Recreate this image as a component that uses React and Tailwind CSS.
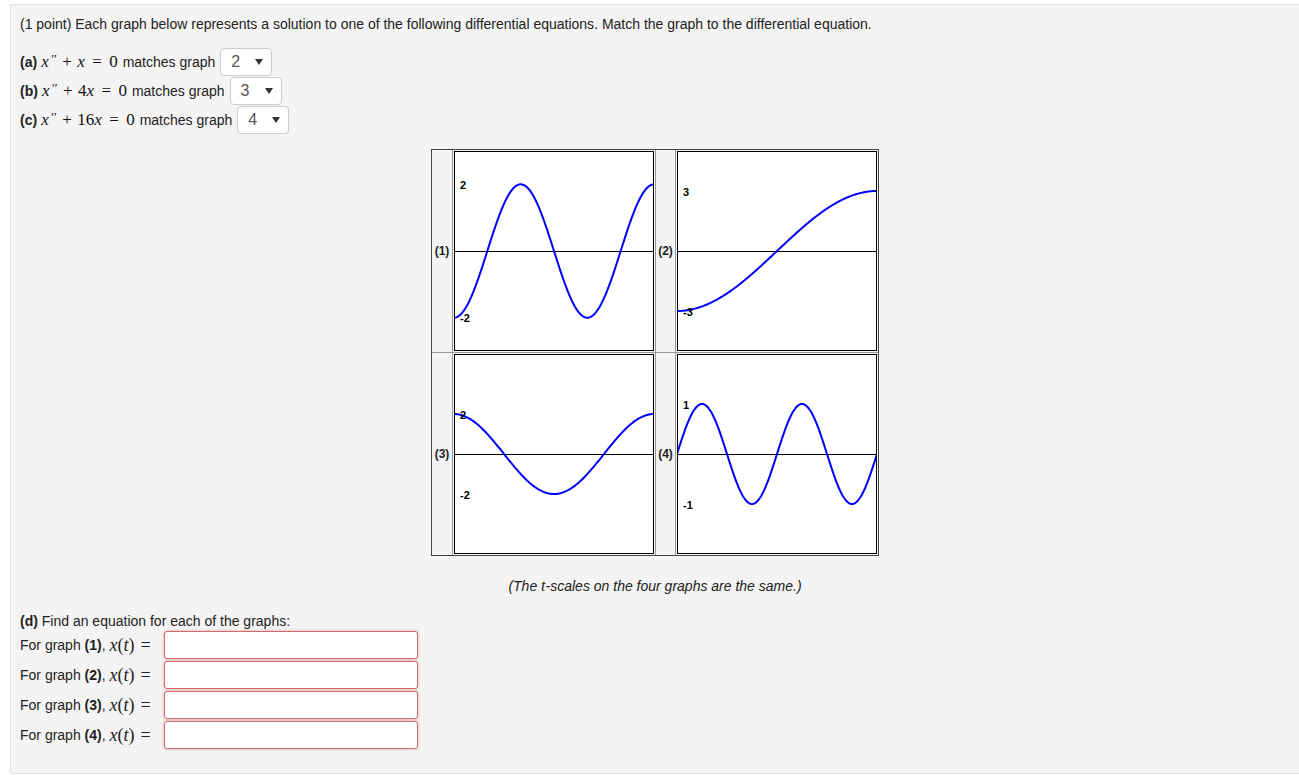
import React from 'react';

const serif = "font-['Liberation_Serif','Times_New_Roman',serif]";

// graph curves in pixel space (200x200, axis at y=100, 200px = pi)
const graphs = [
  { id: 1, f: (x) => 100 + 66.67 * Math.cos((3 * Math.PI * x) / 200), labels: [['2', 33.3], ['-2', 166.7]] },
  { id: 2, f: (x) => 100 + 60 * Math.cos((Math.PI * x) / 200), labels: [['3', 40], ['-3', 160]] },
  { id: 3, f: (x) => 100 - 40 * Math.cos((2 * Math.PI * x) / 200), labels: [['2', 60], ['-2', 140]] },
  { id: 4, f: (x) => 100 - 50 * Math.sin((4 * Math.PI * x) / 200), labels: [['1', 50], ['-1', 150]] },
];

const Graph = ({ g }) => {
  const pts = [];
  for (let x = 0; x <= 200; x += 1) pts.push(`${x},${g.f(x).toFixed(2)}`);
  return (
    <svg width="200" height="200" viewBox="0 0 200 200" className="block bg-white">
      <line x1="0" y1="100.5" x2="200" y2="100.5" stroke="#000" strokeWidth="1" />
      <polyline points={pts.join(' ')} fill="none" stroke="#0000ff" strokeWidth="2" />
      {g.labels.map(([t, y]) => (
        <text key={t} x="6" y={y + 4.5} fontSize="11" fontWeight="bold" fontFamily="Liberation Sans, Arial, sans-serif" fill="#000">
          {t}
        </text>
      ))}
      <rect x="0.5" y="0.5" width="199" height="199" fill="none" stroke="#000" strokeWidth="1" />
    </svg>
  );
};

const LabelCell = ({ n, first }) => (
  <div className={`w-[20px] flex items-center justify-center text-[12px] font-bold text-[#222] ${first ? '' : 'border-l border-[#999]'}`}>
    ({n})
  </div>
);

const GraphCell = ({ g }) => (
  <div className="border-l border-[#999] p-px">
    <Graph g={g} />
  </div>
);

const Select = ({ value }) => (
  <div className="ml-[5px] flex h-[28px] w-[52px] items-center rounded-[4px] border border-[#ccc] bg-white pl-[10px] text-[16px] text-[#555]">
    <span className="w-[24px]">{value}</span>
    <svg width="8" height="6" viewBox="0 0 8 6" className="block">
      <path d="M0 0 L8 0 L4 6 Z" fill="#333" />
    </svg>
  </div>
);

const Eq = ({ coef }) => (
  <span className={`${serif} ml-[4px] flex items-center text-[17px] text-[#111]`}>
    <span className="w-[10px]"><i>x</i></span>
    <span className="w-[6px] text-[13px] -mt-[7px]">′′</span>
    <span className="w-[20px] text-center">+</span>
    {coef && <span>{coef}</span>}
    <span className="w-[10px]"><i>x</i></span>
    <span className="w-[20px] text-center">=</span>
    <span className="ml-[2px]">0</span>
  </span>
);

const MatchRow = ({ letter, coef, value }) => (
  <div className="mb-px flex h-[28px] items-center">
    <b>({letter})</b>
    <Eq coef={coef} />
    <span className="ml-[5px]">matches graph</span>
    <Select value={value} />
  </div>
);

const AnswerRow = ({ n }) => (
  <div className="mb-[2px] flex h-[28px] items-center">
    <div className="w-[144px] shrink-0 whitespace-nowrap flex items-center">
      <span>For graph&nbsp;</span>
      <b>({n})</b>
      <span>,&nbsp;</span>
      <span className={`${serif} text-[18px] flex items-center`}>
        <i>x</i>
        <span>(</span>
        <i>t</i>
        <span>)</span>
        <span className="ml-[6px]">=</span>
      </span>
    </div>
    <input
      type="text"
      className="h-[28px] w-[254px] rounded-[3px] border border-[#cf6b6b] bg-white shadow-[0_0_3px_rgba(210,90,90,0.55)] outline-none"
    />
  </div>
);

export default function App() {
  return (
    <div className="min-h-screen bg-white pt-[4px] font-['Liberation_Sans',Arial,sans-serif] text-[14px] text-[#222]">
      <div className="ml-[10px] border border-r-0 border-[#e2e2e2] bg-[#f4f4f4] pl-[9px] pr-[9px] pt-[9px] pb-[22px]">
        <div className="h-[20px] leading-[20px]">
          (1 point) Each graph below represents a solution to one of the following differential equations. Match the graph to the differential equation.
        </div>

        <div className="mt-[14px]">
          <MatchRow letter="a" value="2" />
          <MatchRow letter="b" coef="4" value="3" />
          <MatchRow letter="c" coef="16" value="4" />
        </div>

        <div className="mx-auto mt-[15px] w-fit border border-[#444] bg-[#f4f4f4]">
          <div className="flex">
            <LabelCell n={1} first />
            <GraphCell g={graphs[0]} />
            <LabelCell n={2} />
            <GraphCell g={graphs[1]} />
          </div>
          <div className="flex border-t border-[#999]">
            <LabelCell n={3} first />
            <GraphCell g={graphs[2]} />
            <LabelCell n={4} />
            <GraphCell g={graphs[3]} />
          </div>
        </div>

        <div className="mt-[20px] h-[20px] text-center italic leading-[20px]">
          (The <span className={`${serif} text-[16px] italic`}>t</span>-scales on the four graphs are the same.)
        </div>

        <div className="mt-[15px] h-[20px] leading-[20px]">
          <b>(d)</b> Find an equation for each of the graphs:
        </div>
        <div>
          <AnswerRow n={1} />
          <AnswerRow n={2} />
          <AnswerRow n={3} />
          <AnswerRow n={4} />
        </div>
      </div>
    </div>
  );
}
